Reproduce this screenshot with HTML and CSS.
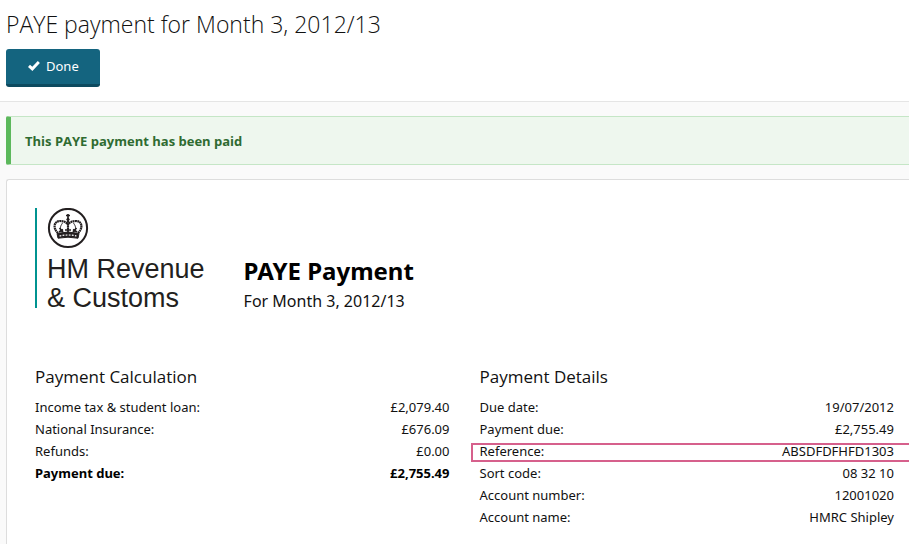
FILE: index.html
```html
<!DOCTYPE html>
<html lang="en-GB">
<head>
<meta charset="UTF-8" />
<meta name="viewport" content="width=device-width, initial-scale=1" />
<title>PAYE payment for Month 3, 2012/13</title>
<link rel="stylesheet" href="styles.css">
</head>
<body>
<header class="page-header">
    <h1>PAYE payment for Month 3, 2012/13</h1>
    <button type="button" class="btn-done">
        <svg width="14" height="12" viewBox="0 0 14 12" aria-hidden="true"><path d="M1 6.9 3 4.7 5.3 6.8 10.8 1 12.9 3 5.4 11z" fill="#fff"/></svg>
        Done
    </button>
</header>

<main class="content">
    <div class="alert" role="status">This PAYE payment has been paid</div>

    <section class="card">
        <div class="card-top">
            <div class="logo">
                <svg class="crest" width="42" height="42" viewBox="0 0 42 42" aria-hidden="true">
                    <circle cx="21" cy="20" r="19.1" fill="#fff" stroke="#231f20" stroke-width="2"/>
                    <g fill="none" stroke="#231f20">
                        <path d="M21 6v6M19 7.5h4" stroke-width="1.7"/>
                        <circle cx="21" cy="11.5" r="1.2" fill="#231f20"/>
                        <path d="M11 25C5.500 20 7 13 13 13c4 0 6.5 1.5 8 3.500 1.5-2 4-3.500 8-3.500 6 0 7.500 7 2 12" stroke-width="2.200" stroke-dasharray="1.8 .4"/>
                        <path d="M14.5 24c-2.5-5 0-7 1-9M27.5 24c2.5-5 0-7-1-9" stroke-width="1"/>
                        <path d="M21 13v9" stroke-width="2.200" stroke-dasharray="1.7 .5"/>
                        <path d="M18 22h6M21 19.5v5M12.500 20l3.500 4M29.500 20l-3.500 4M12 24l4-2.500M30 24l-4-2.500" stroke-width="1.700"/>
                        <path d="M10 25.500q11-3 22 0l-1 4.700q-10-2-20 0z" fill="#231f20" stroke-width="1"/>
                        <path d="M12.500 28q8.500-2 17 0" stroke="#fff" stroke-width="1.2" stroke-dasharray="1.8 1.3"/>
                    </g>
                </svg>
                <div class="logo-name">HM Revenue<br>&amp; Customs</div>
            </div>
            <div class="card-title">
                <h2>PAYE Payment</h2>
                <p>For Month 3, 2012/13</p>
            </div>
        </div>

        <div class="columns">
            <section>
                <h3 id="calculation">Payment Calculation</h3>
                <table aria-labelledby="calculation">
                    <tr><th>Income tax &amp; student loan:</th><td>£2,079.40</td></tr>
                    <tr><th>National Insurance:</th><td>£676.09</td></tr>
                    <tr><th>Refunds:</th><td>£0.00</td></tr>
                    <tr class="total"><th>Payment due:</th><td>£2,755.49</td></tr>
                </table>
            </section>
            <section>
                <h3 id="details">Payment Details</h3>
                <table aria-labelledby="details">
                    <tr><th>Due date:</th><td>19/07/2012</td></tr>
                    <tr><th>Payment due:</th><td>£2,755.49</td></tr>
                    <tr class="highlight"><th>Reference:</th><td>ABSDFDFHFD1303</td></tr>
                    <tr><th>Sort code:</th><td>08 32 10</td></tr>
                    <tr><th>Account number:</th><td>12001020</td></tr>
                    <tr><th>Account name:</th><td>HMRC Shipley</td></tr>
                </table>
            </section>
        </div>
    </section>
</main>
</body>
</html>
```
FILE: styles.css
```css
*{
    box-sizing: border-box;
}
body{
    margin: 0;
    background-color: #fafafa;
    color: #111;
    font-family: "Noto Sans", "Open Sans", sans-serif;
    font-size: 13px;
    line-height: 22px;
    overflow-x: hidden;
}
h1, h2, h3, p{
    margin: 0;
}
.page-header{
    background-color: #fff;
    border-bottom: 1px solid #e5e5e5;
    padding: 8px 6px 14px;
}
.page-header h1{
    font-family: "Open Sans", "Noto Sans", sans-serif;
    font-size: 23px;
    font-weight: 300;
    line-height: 32px;
    margin-bottom: 9px;
}
.btn-done{
    display: flex;
    align-items: center;
    gap: 5px;
    height: 38px;
    padding: 0 21px 2px;
    border: 0;
    border-bottom: 3px solid #0d4a5f;
    border-radius: 3px;
    background-color: #14647f;
    color: #fff;
    font: inherit;
    cursor: pointer;
}
.content{
    padding: 14px 0 0 6px;
}
.alert{
    background-color: #eef7ee;
    border: 1px solid #c5e6c6;
    border-left: 5px solid #5cb85c;
    border-right: 0;
    border-radius: 2px 0 0 2px;
    color: #2f6b31;
    font-family: "Open Sans", "Noto Sans", sans-serif;
    font-weight: bold;
    padding: 13px 14px 12px;
    margin-bottom: 14px;
}
.card{
    background-color: #fff;
    border: 1px solid #ddd;
    border-right: 0;
    border-radius: 3px 0 0 0;
    padding: 28px 15px 28px 28px;
}
.card-top{
    display: flex;
    align-items: flex-start;
    gap: 39px;
    margin-bottom: 50px;
}
.logo{
    border-left: 2px solid #009390;
    padding-left: 10px;
    height: 100px;
}
.crest{
    display: block;
    margin-bottom: 5px;
}
.logo-name{
    color: #231f20;
    font-family: "Liberation Sans", Arial, sans-serif;
    font-size: 27px;
    line-height: 29px;
    white-space: nowrap;
}
.card-title{
    padding-top: 47px;
}
.card-title h2{
    color: #000;
    font-size: 24px;
    line-height: 32px;
}
.card-title p{
    font-size: 16px;
    line-height: 28px;
}
.columns{
    display: grid;
    grid-template-columns: 1fr 1fr;
    gap: 30px;
}
.columns h3{
    font-family: "Open Sans", "Noto Sans", sans-serif;
    font-size: 17px;
    font-weight: normal;
    line-height: 24px;
    margin-bottom: 7px;
}
table{
    width: 100%;
    border-collapse: collapse;
}
th, td{
    padding: 0;
    font-weight: normal;
    text-align: left;
}
td{
    text-align: right;
}
.total th, .total td{
    color: #000;
    font-weight: bold;
}
.highlight{
    position: relative;
}
.highlight::after{
    content: "";
    position: absolute;
    inset: 3px -20px 0 -9px;
    border: 2px solid #d6608c;
}
```
